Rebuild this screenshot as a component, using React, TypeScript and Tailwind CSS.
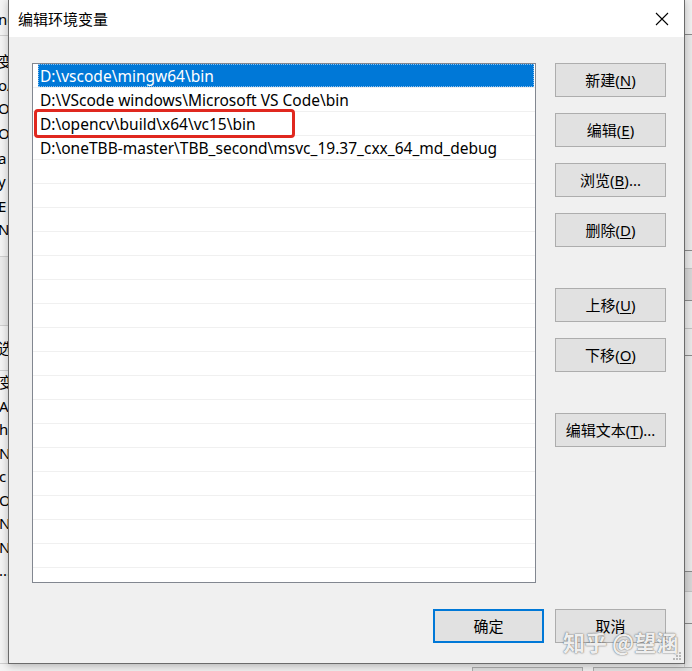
const PATHS = [
  "D:\\vscode\\mingw64\\bin",
  "D:\\VScode windows\\Microsoft VS Code\\bin",
  "D:\\opencv\\build\\x64\\vc15\\bin",
  "D:\\oneTBB-master\\TBB_second\\msvc_19.37_cxx_64_md_debug",
];

const ROWS = [...PATHS, ...Array(18).fill("")];

// bits of the window behind the dialog that peek out on the left
const BEHIND = [
  { t: "ng", y: "mt-[12px]" },
  { t: "变量", y: "mt-[18px]" },
  { t: "oA", y: "mt-[4px]" },
  { t: "Or", y: "mt-[3px]" },
  { t: "Or", y: "mt-[5px]" },
  { t: "a", y: "mt-[5px]" },
  { t: "y", y: "mt-[3px]" },
  { t: "E", y: "mt-[5px]" },
  { t: "N", y: "mt-[3px]" },
];

const BEHIND2 = ["变", "Al", "h", "N", "c", "Or", "N", "N", "..."];

function Btn({
  label,
  mn,
  tail = "",
  className = "",
}: {
  label: string;
  mn?: string;
  tail?: string;
  className?: string;
}) {
  return (
    <div
      className={`flex h-[34px] w-[111px] items-center justify-center border border-[#adadad] bg-[#e1e1e1] ${className}`}
    >
      <span>
        {label}
        {mn && (
          <>
            (<span className="underline underline-offset-2">{mn}</span>)
          </>
        )}
        {tail}
      </span>
    </div>
  );
}

export default function App() {
  return (
    <div className="relative h-[671px] w-[692px] overflow-hidden bg-[#f0f0f0] font-['Noto_Sans','Noto_Sans_CJK_SC',sans-serif] text-[15px] leading-none text-black">
      {/* window behind, left part */}
      <div className="absolute left-0 top-0 flex h-full w-[20px] flex-col bg-[#f4f4f4] text-[15px] whitespace-nowrap">
        <div className="border-b border-[#cfcfcf]">
          {BEHIND.slice(0, 1).map((b, i) => (
            <div key={i} className={`${b.y} mb-[8px] -ml-[2px]`}>{b.t}</div>
          ))}
        </div>
        {BEHIND.slice(1).map((b, i) => (
          <div key={i} className={`${b.y} h-[20px] -ml-[2px]`}>{b.t}</div>
        ))}
        <div className="mt-[14px] h-[70px] border-y border-[#cfcfcf] bg-[#ebebeb]" />
        <div className="flex h-[45px] items-center border-b border-[#cfcfcf] -ml-[2px]">选项</div>
        {BEHIND2.map((t, i) => (
          <div key={i} className="flex h-[23.5px] items-center -ml-[1px]">{t}</div>
        ))}
        <div className="mt-[80px] border-t border-[#cfcfcf]" />
      </div>

      {/* window behind, right part */}
      <div className="absolute right-0 top-0 flex h-full w-[8px] flex-col border-l border-[#d0d0d0] bg-[#e8e8e8]">
        <div className="h-[35px] border-b border-[#8a8a8a] bg-[#f0f0f0]" />
        <div className="h-[216px] border-b border-[#8a8a8a]" />
        <div className="h-[18px] border-b border-[#c0c0c0]" />
        <div className="h-[32px] border-b border-[#8a8a8a] bg-[#d6d6d6]" />
        <div className="h-[28px] border-b border-[#c0c0c0]" />
        <div className="h-[27px] border-b border-[#8a8a8a]" />
        <div className="h-[216px] border-b border-[#8a8a8a]" />
        <div className="h-[20px] border-b border-[#c0c0c0] bg-[#d6d6d6]" />
        <div className="h-[32px] border-b border-[#8a8a8a]" />
      </div>

      {/* buttons of the window behind, peeking below */}
      <div className="absolute left-[472px] top-[667px] h-[10px] w-[111px] border border-[#adadad] bg-[#e1e1e1]" />
      <div className="absolute left-[593px] top-[667px] h-[10px] w-[111px] border border-[#adadad] bg-[#e1e1e1]" />

      {/* dialog */}
      <div className="absolute left-[8px] top-[-1px] flex h-[665px] w-[677px] flex-col border border-[#6b6b6b] bg-[#f0f0f0] shadow-[0_2px_8px_rgba(0,0,0,0.25)]">
        <div className="flex h-[37px] items-center justify-between bg-white pl-[9px] pr-[15px]">
          <span className="font-['Noto_Sans_CJK_SC',sans-serif] text-[15px]">编辑环境变量</span>
          <svg width="14" height="14" viewBox="0 0 14 14" className="mt-[1px]">
            <path d="M1 1 L13 13 M13 1 L1 13" stroke="#000" strokeWidth="1.1" />
          </svg>
        </div>

        <div className="flex gap-[19px] pl-[23px] pt-[26px]">
          {/* path list */}
          <div className="relative h-[520px] w-[504px] overflow-hidden border border-[#828790] bg-white text-[15.5px]">
            {ROWS.map((r, i) => (
              <div key={i} className="flex h-[24px] border-b border-[#f0f0f0]">
                {i === 0 ? (
                  <div className="ml-[5px] mr-[1px] flex flex-1 items-center bg-[#0078d7] pl-[2px] pt-[2px] text-white outline-1 outline-dotted outline-offset-[-1px] outline-[#8cc0ee]">
                    {r}
                  </div>
                ) : (
                  <div className="flex flex-1 items-center pl-[7px] pt-[3px]">{r}</div>
                )}
              </div>
            ))}
            {/* red annotation box */}
            <div className="absolute left-[1px] top-[45px] h-[29px] w-[261px] rounded-[4px] border-[3px] border-[#e0281f]" />
          </div>

          {/* side buttons */}
          <div className="flex flex-col gap-[16px]">
            <Btn label="新建" mn="N" />
            <Btn label="编辑" mn="E" />
            <Btn label="浏览" mn="B" tail="..." />
            <Btn label="删除" mn="D" />
            <Btn label="上移" mn="U" className="mt-[25px]" />
            <Btn label="下移" mn="O" />
            <Btn label="编辑文本" mn="T" tail="..." className="mt-[25px]" />
          </div>
        </div>

        <div className="mt-[26px] flex justify-end gap-[11px] pr-[18px]">
          <div className="flex h-[34px] w-[111px] items-center justify-center border-2 border-[#0078d7] bg-[#e1e1e1]">
            确定
          </div>
          <Btn label="取消" />
        </div>

        {/* resize grip */}
        <svg width="10" height="10" viewBox="0 0 10 10" className="absolute bottom-[2px] right-[2px]">
          {[
            [8, 2],
            [5, 5],
            [8, 5],
            [2, 8],
            [5, 8],
            [8, 8],
          ].map(([x, y], i) => (
            <rect key={i} x={x - 1} y={y - 1} width="2" height="2" fill="#b8b8b8" />
          ))}
        </svg>
      </div>

      {/* watermark */}
      <div className="absolute left-[563px] top-[630px] font-['Noto_Sans_CJK_SC',sans-serif] text-[22px] font-semibold text-white/90 [text-shadow:0_0_1px_rgba(50,50,50,0.7),0_0_2px_rgba(50,50,50,0.5)]">
        知乎 @望涵
      </div>
    </div>
  );
}
